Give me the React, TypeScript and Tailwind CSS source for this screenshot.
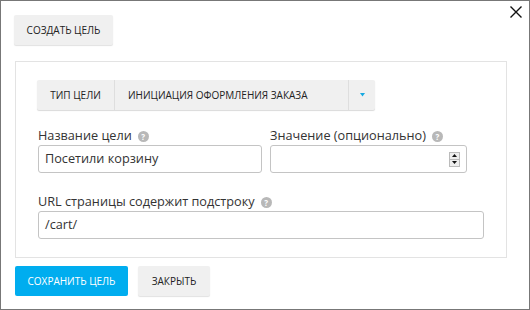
import React from "react";

const Help = () => (
  <span className="inline-flex items-center justify-center w-[11px] h-[11px] rounded-full bg-[#b8b8b8] text-white text-[8px] font-bold leading-none ml-[6px] align-middle">?</span>
);

export default function App() {
  return (
    <div
      className="w-[530px] h-[310px] border border-[#777] bg-white relative text-[#333]"
      style={{ fontFamily: '"Open Sans", "Liberation Sans", sans-serif' }}
    >
      <button className="absolute right-[6px] top-[4px] w-[14px] h-[14px]">
        <svg viewBox="0 0 14 14" className="w-[14px] h-[14px]">
          <path d="M1.5 1.5 L12.5 12.5 M12.5 1.5 L1.5 12.5" stroke="#111" strokeWidth="1.4" />
        </svg>
      </button>
      <div className="pl-[13px] pt-[14px]">
        <button className="h-[30px] w-[99px] bg-[#f0f0f0] rounded-[2px] shadow-[0_1px_1px_rgba(0,0,0,0.12)] text-[10px] uppercase text-[#222]">
          Создать цель
        </button>
      </div>
      <div className="ml-[14px] mt-[16px] w-[492px] h-[197px] border border-[#e3e3e3] pl-[21px] pt-[18px]">
        <div className="flex h-[30px] w-[338px] bg-[#f0f0f0] rounded-[2px] shadow-[0_1px_1px_rgba(0,0,0,0.15)] text-[10px] uppercase text-[#222]">
          <div className="w-[78px] flex items-center justify-center border-r border-[#dedede]">Тип цели</div>
          <div className="w-[234px] flex items-center pl-[13px] border-r border-[#dedede]">Инициация оформления заказа</div>
          <div className="flex-1 flex items-center justify-center">
            <svg width="5" height="4" viewBox="0 0 5 4"><path d="M0 0 H5 L2.5 3.5 Z" fill="#17a9e1" /></svg>
          </div>
        </div>
        <div className="flex mt-[16px]">
          <div className="w-[233px] pl-[1px]">
            <div className="text-[12.7px] leading-[18px] h-[18px]">Название цели<Help /></div>
            <div className="mt-[1px] w-[224px] h-[28px] border border-[#c4c4c4] rounded-[3px] flex items-center px-[6px] text-[12.7px]">
              Посетили корзину
            </div>
          </div>
          <div>
            <div className="text-[12.7px] leading-[18px] h-[18px]">Значение (опционально)<Help /></div>
            <div className="mt-[1px] w-[197px] h-[28px] border border-[#c4c4c4] rounded-[3px] flex items-center justify-end pr-[6px]">
              <div className="flex flex-col w-[11px] h-[15px] border border-[#bbb] bg-[#eee]">
                <div className="flex-1 flex items-center justify-center border-b border-[#bbb]">
                  <svg width="5" height="3" viewBox="0 0 5 3"><path d="M0 3 H5 L2.5 0 Z" fill="#111" /></svg>
                </div>
                <div className="flex-1 flex items-center justify-center">
                  <svg width="5" height="3" viewBox="0 0 5 3"><path d="M0 0 H5 L2.5 3 Z" fill="#111" /></svg>
                </div>
              </div>
            </div>
          </div>
        </div>
        <div className="mt-[19px] pl-[1px]">
          <div className="text-[12.7px] leading-[18px] h-[18px]">URL страницы содержит подстроку<Help /></div>
          <div className="mt-[1px] w-[446px] h-[28px] border border-[#c4c4c4] rounded-[3px] flex items-center px-[6px] text-[12.7px]">
            /cart/
          </div>
        </div>
      </div>
      <div className="flex ml-[14px] mt-[8px] gap-[10px]">
        <button className="h-[30px] w-[113px] bg-[#00adef] rounded-[2px] text-white text-[10px] uppercase">Сохранить цель</button>
        <button className="h-[30px] w-[72px] bg-[#f0f0f0] rounded-[2px] shadow-[0_1px_1px_rgba(0,0,0,0.12)] text-[10px] uppercase text-[#222]">Закрыть</button>
      </div>
    </div>
  );
}
